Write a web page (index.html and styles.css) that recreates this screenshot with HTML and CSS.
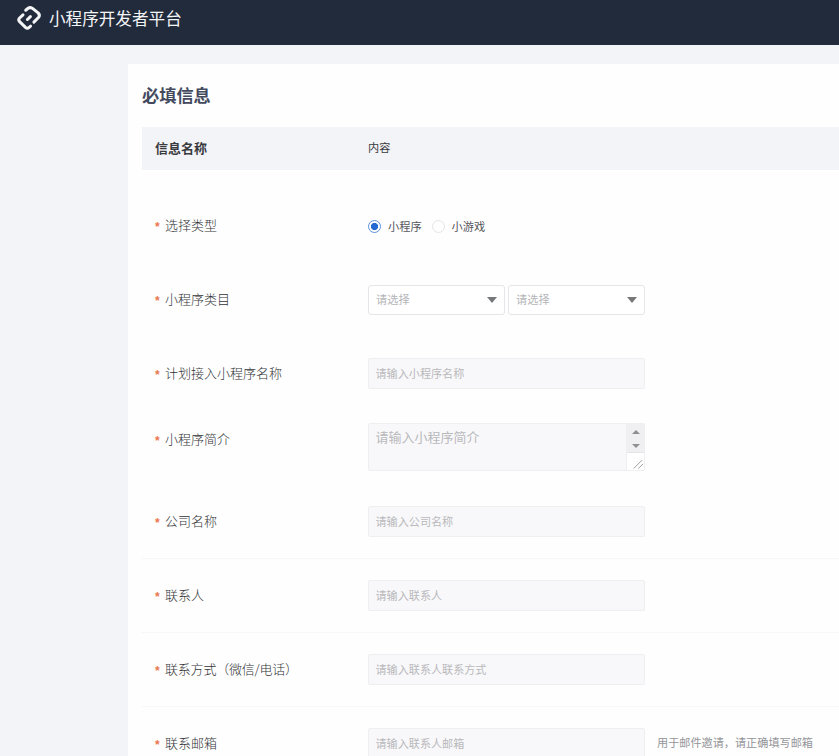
FILE: index.html
```html
<!DOCTYPE html>
<html lang="zh-CN">
<head>
<meta charset="utf-8">
<title>小程序开发者平台</title>
<link rel="stylesheet" href="styles.css">
</head>
<body>
<header class="topbar">
  <svg class="logo" viewBox="0 0 24 24" fill="none" stroke="#f4f5f7" stroke-width="3" stroke-linecap="round" stroke-linejoin="round"><path d="M6 8.800L2.600 12Q.9 13.900 2.600 15.700L8.500 21.400Q10.300 23 12.200 21.400L13.600 20.200M8.700 4.200L11.100 2.300Q13 1 15.200 2.200L21.100 6.900Q23.300 9.200 21.700 11.300L16.900 16.100M10.400 13.500L13.400 10.600"/></svg>
  <span class="brand">小程序开发者平台</span>
</header>
<main class="panel">
  <h1 class="title">必填信息</h1>
  <div class="table-head"><span class="head-name">信息名称</span><span class="head-content">内容</span></div>
  <form class="form">
    <div class="row plain">
      <div class="label">选择类型</div>
      <div class="radios"><i class="radio checked"></i><span>小程序</span><i class="radio"></i><span>小游戏</span></div>
    </div>
    <div class="row plain">
      <div class="label">小程序类目</div>
      <div class="selects"><div class="select">请选择</div><div class="select">请选择</div></div>
    </div>
    <div class="row plain">
      <div class="label">计划接入小程序名称</div>
      <div class="input">请输入小程序名称</div>
    </div>
    <div class="row intro plain">
      <div class="label">小程序简介</div>
      <div class="textarea">
        <span class="textarea-text">请输入小程序简介</span>
        <div class="scroll">
          <div class="arrows"><i class="up"></i><i class="down"></i></div>
          <svg class="grip" viewBox="0 0 18 18" stroke="#999" stroke-width="1"><path d="M7 16.500L16 7.500M12 16.500L17 11.500"/></svg>
        </div>
      </div>
    </div>
    <div class="row">
      <div class="label">公司名称</div>
      <div class="input">请输入公司名称</div>
    </div>
    <div class="row">
      <div class="label">联系人</div>
      <div class="input">请输入联系人</div>
    </div>
    <div class="row">
      <div class="label"><span class="contact">联系方式（微信/电话）</span></div>
      <div class="input">请输入联系人联系方式</div>
    </div>
    <div class="row">
      <div class="label">联系邮箱</div>
      <div class="input">请输入联系人邮箱</div>
      <span class="note">用于邮件邀请，请正确填写邮箱</span>
    </div>
  </form>
</main>
</body>
</html>
```
FILE: styles.css
```css
* { box-sizing: border-box; }
html, body { height: 100%; }
body {
  margin: 0;
  overflow: hidden;
  background: #f2f4f8;
  color: #55565a;
  font-family: "Noto Sans CJK SC", sans-serif;
}
.topbar {
  height: 45px;
  padding: 0 0 9px 17px;
  display: flex;
  align-items: center;
  background: #222b3c;
}
.logo { width: 24px; height: 24px; margin-right: 8px; overflow: visible; }
.brand { font-size: 16.6px; line-height: 24px; padding-bottom: 1px; color: #f4f5f7; }
.panel {
  margin: 19px 0 0 128px;
  padding: 16px 0 0 14px;
  height: 692px;
  overflow: hidden;
  background: #fefefe;
}
.title { margin: 0; height: 47px; font-size: 17.2px; line-height: 30px; font-weight: 700; color: #434a5e; }
.table-head {
  height: 43px;
  padding: 0 0 3px 13px;
  display: flex;
  align-items: center;
  background: #f3f4f7;
  color: #3a3b3f;
}
.head-name { width: 213px; font-size: 13px; font-weight: 700; }
.head-content { font-size: 11.200px; }
.form { margin: 19px 0 0; }
.row {
  height: 74px;
  padding: 0 0 2px 13px;
  display: flex;
  align-items: center;
  border-bottom: 1px solid #f7f7f8;
}
.row.plain { border-bottom-color: transparent; }
.label {
  width: 213px;
  flex: none;
  display: flex;
  align-items: center;
  margin-top: 1px;
  font-size: 13px;
  line-height: 20px;
  font-weight: 300;
  color: #333438;
}
.label::before {
  content: "*";
  width: 10px;
  padding-top: 4px;
  font-family: "Liberation Sans", sans-serif;
  font-size: 12px;
  line-height: 15px;
  font-weight: 700;
  color: #e9774f;
}
.contact { letter-spacing: -0.2px; }
.radios { display: flex; align-items: center; padding-top: 3px; font-size: 11.200px; color: #55565c; }
.radio { width: 13px; height: 13px; margin-right: 7px; border: 1px solid #e2e4e8; border-radius: 50%; }
.radio.checked { border-color: #5b90e0; background: radial-gradient(circle, #2468d2 3.3px, #fff 3.900px); }
.radios span + .radio { margin-left: 10px; }
.selects { display: flex; gap: 3px; padding-top: 2px; }
.select {
  width: 137px;
  height: 30px;
  padding: 0 7px;
  display: flex;
  align-items: center;
  justify-content: space-between;
  border: 1px solid #e5e6ea;
  border-radius: 3px;
  background: #fff;
  font-size: 11.200px;
  line-height: 27px;
  color: #b5b6b9;
}
.select::after {
  content: "";
  border: 5px solid transparent;
  border-top: 6px solid #77787a;
  border-bottom: 0;
}
.input {
  width: 277px;
  height: 31px;
  margin-top: 1px;
  padding-left: 6.500px;
  border: 1px solid #eeeff1;
  border-radius: 2px;
  background: #f8f8fa;
  font-size: 11.100px;
  line-height: 28px;
  color: #b8b9bc;
}
.row.intro { align-items: flex-start; padding-top: 12px; }
.intro .label { margin-top: 6px; }
.textarea {
  width: 277px;
  height: 48px;
  display: flex;
  justify-content: space-between;
  border: 1px solid #eeeff1;
  border-radius: 2px;
  background: #f8f8fa;
}
.textarea-text { padding: 3px 0 0 6.500px; font-size: 13px; line-height: 20px; color: #b8b9bc; }
.scroll { width: 18px; display: flex; flex-direction: column; background: #fff; border-left: 1px solid #eeeff1; }
.arrows {
  height: 29px;
  flex: none;
  padding: 6px 0 4px;
  display: flex;
  flex-direction: column;
  align-items: center;
  justify-content: space-between;
  background: #f0f0f2;
  border-bottom: 1px solid #e4e5e7;
}
.up, .down { border: 4px solid transparent; }
.up { border-top: 0; border-bottom-color: #8f9092; }
.down { border-bottom: 0; border-top-color: #8f9092; }
.grip { width: 17px; height: 17px; }
.note { margin: -1px 0 0 12px; font-size: 11.150px; line-height: 20px; color: #949599; white-space: nowrap; }
```
